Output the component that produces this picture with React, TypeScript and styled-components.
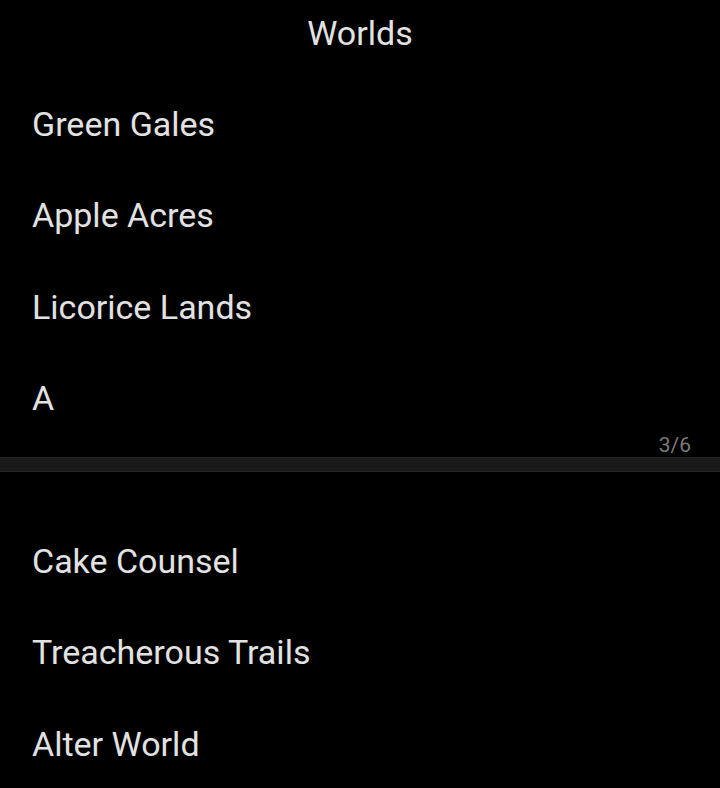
import React from "react";
import styled, { createGlobalStyle } from "styled-components";

const GlobalStyle = createGlobalStyle`
  html, body {
    margin: 0;
    padding: 0;
    background: #000;
  }
  body {
    font-family: Roboto, "Liberation Sans", sans-serif;
    color: #e2e2e2;
  }
`;

const Screen = styled.div`
  width: 720px;
  height: 788px;
  overflow: hidden;
  background: #000;
  display: flex;
  flex-direction: column;
`;

const Header = styled.div`
  height: 66px;
  flex-shrink: 0;
  display: flex;
  align-items: center;
  justify-content: center;
  font-size: 34px;
  color: #e2e2e2;
`;

const Section = styled.div<{ top?: number }>`
  position: relative;
  display: flex;
  flex-direction: column;
  padding-top: ${(p) => p.top ?? 0}px;
`;

const Row = styled.div`
  height: 91.5px;
  flex-shrink: 0;
  display: flex;
  align-items: center;
  padding-left: 32px;
  font-size: 34px;
  color: #e2e2e2;
`;

const Counter = styled.span`
  position: absolute;
  right: 29px;
  bottom: 0;
  font-size: 21px;
  color: #7a7a7a;
`;

const Divider = styled.div`
  height: 13px;
  flex-shrink: 0;
  background: #1a1a1a;
  border-top: 1px solid #262626;
  border-bottom: 1px solid #262626;
`;

const Spacer = styled.div<{ size: number }>`
  height: ${(p) => p.size}px;
  flex-shrink: 0;
`;

const topWorlds = ["Green Gales", "Apple Acres", "Licorice Lands", "A"];
const bottomWorlds = ["Cake Counsel", "Treacherous Trails", "Alter World"];

export default function App() {
  return (
    <Screen>
      <GlobalStyle />
      <Header>Worlds</Header>
      <Section top={12}>
        {topWorlds.map((name) => (
          <Row key={name}>{name}</Row>
        ))}
        <Spacer size={13} />
        <Counter>3/6</Counter>
      </Section>
      <Divider />
      <Spacer size={43} />
      <Section>
        {bottomWorlds.map((name) => (
          <Row key={name}>{name}</Row>
        ))}
      </Section>
    </Screen>
  );
}
